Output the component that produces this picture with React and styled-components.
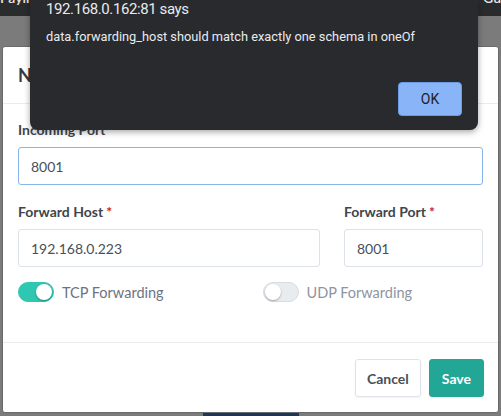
import React from "react";
import styled, { createGlobalStyle } from "styled-components";

const Global = createGlobalStyle`
  html, body { margin: 0; padding: 0; }
  body { background: #7b7b7b; overflow: hidden; font-family: Lato, "Liberation Sans", sans-serif; }
  * { box-sizing: border-box; }
`;

const Page = styled.div`
  position: relative;
  width: 501px;
  height: 416px;
  overflow: hidden;
  background: #7b7b7b;
  display: flex;
  flex-direction: column;
`;

const TopBar = styled.div`
  height: 16px;
  background: #2a2b2d;
  display: flex;
  justify-content: space-between;
  overflow: hidden;
  color: #e6e6e6;
  font: 600 14px Lato, sans-serif;
  line-height: 14px;
`;

const TopText = styled.span`
  margin-top: -9px;
`;

const ModalWrap = styled.div`
  padding: 30px 2px 0 2px;
`;

const Modal = styled.div`
  width: 497px;
  height: 367px;
  background: #fff;
  border-radius: 3px;
  border: 1px solid #6a6a6a;
  display: flex;
  flex-direction: column;
  color: #495057;
`;

const Header = styled.div`
  height: 57px;
  border-bottom: 1px solid #e9ecef;
  display: flex;
  align-items: center;
  padding: 0 15px;
`;

const Title = styled.h5`
  margin: 0;
  font: 700 18px Lato, sans-serif;
  color: #343a40;
`;

const Body = styled.div`
  padding: 16px 15px 0 15px;
  height: 239px;
  border-bottom: 1px solid #e9ecef;
`;

const Group = styled.div`
  margin-bottom: 17px;
`;

const Label = styled.label`
  display: block;
  font: 700 14px Lato, sans-serif;
  line-height: 20px;
  color: #3f454b;
  margin-bottom: 7px;
`;

const Req = styled.span`
  color: #cd201f;
  margin-left: 3px;
`;

const Input = styled.div`
  height: 38px;
  border: 1px solid ${(p) => (p.$focus ? "#86b5ea" : "#dde2e9")};
  border-radius: 3px;
  padding: 0 12px;
  display: flex;
  align-items: center;
  font: 400 14px Lato, sans-serif;
  color: #495057;
  background: #fff;
`;

const Row = styled.div`
  display: grid;
  grid-template-columns: ${(p) => p.$cols};
  column-gap: 24px;
  margin-top: ${(p) => p.$mt || "0"};
`;

const Toggle = styled.div`
  display: flex;
  align-items: center;
  gap: 8px;
  font: 400 14.5px Lato, sans-serif;
  color: ${(p) => (p.$on ? "#6b7383" : "#8d94a2")};
`;

const Track = styled.span`
  position: relative;
  width: 36px;
  height: 20px;
  border-radius: 10px;
  background: ${(p) => (p.$on ? "#2fc6b2" : "#e9ecef")};
  border: 1px solid ${(p) => (p.$on ? "#2fc6b2" : "#d8dde3")};
  flex-shrink: 0;
`;

const Knob = styled.span`
  position: absolute;
  top: 1px;
  left: ${(p) => (p.$on ? "17px" : "1px")};
  width: 16px;
  height: 16px;
  border-radius: 50%;
  background: #fff;
  box-shadow: 0 1px 2px rgba(0, 0, 0, 0.3);
`;

const Footer = styled.div`
  flex: 1;
  display: flex;
  justify-content: flex-end;
  align-items: flex-start;
  gap: 8px;
  padding: 16px 14px 0 0;
`;

const Button = styled.button`
  height: 38px;
  padding: 0 ${(p) => (p.$primary ? "12px" : "11px")};
  border-radius: 3px;
  font: 700 14px Lato, sans-serif;
  border: 1px solid ${(p) => (p.$primary ? "#22a797" : "#dfe3e8")};
  background: ${(p) => (p.$primary ? "#22a797" : "#fff")};
  color: ${(p) => (p.$primary ? "#fff" : "#495057")};
  box-shadow: 0 1px 2px rgba(0, 0, 0, 0.05);
`;

const BottomBar = styled.div`
  height: 3px;
  padding-left: 203px;
`;

const BlueBlock = styled.div`
  width: 96px;
  height: 3px;
  background: #1e355a;
`;

const Alert = styled.div`
  position: absolute;
  left: 30px;
  top: 0;
  width: 448px;
  height: 130px;
  background: #292a2d;
  border-radius: 0 0 8px 8px;
  box-shadow: 0 2px 6px rgba(0, 0, 0, 0.35);
  padding: 0 16px;
  display: flex;
  flex-direction: column;
  font-family: Roboto, "Noto Sans", sans-serif;
  color: #e8eaed;
`;

const AlertTitle = styled.div`
  font-size: 15px;
  letter-spacing: -0.4px;
  line-height: 18px;
`;

const AlertMsg = styled.div`
  font-size: 12.8px;
  line-height: 18px;
  margin-top: 10px;
`;

const AlertActions = styled.div`
  display: flex;
  justify-content: flex-end;
  margin-top: 36px;
`;

const OkButton = styled.button`
  width: 64px;
  height: 34px;
  background: #8ab4f8;
  border: 1px solid #6d9be6;
  border-radius: 4px;
  color: #202124;
  font: 400 14px Roboto, sans-serif;
`;

export default function App() {
  return (
    <>
      <Global />
      <Page>
        <TopBar>
          <TopText>Paying</TopText>
          <TopText>Gu</TopText>
        </TopBar>
        <ModalWrap>
          <Modal>
            <Header>
              <Title>New Stream</Title>
            </Header>
            <Body>
              <Group>
                <Label>Incoming Port</Label>
                <Input $focus>8001</Input>
              </Group>
              <Row $cols="calc((100% + 24px) * 2 / 3 - 24px) 1fr">
                <Group>
                  <Label>
                    Forward Host<Req>*</Req>
                  </Label>
                  <Input>192.168.0.223</Input>
                </Group>
                <Group>
                  <Label>
                    Forward Port<Req>*</Req>
                  </Label>
                  <Input>8001</Input>
                </Group>
              </Row>
              <Row $cols="1fr 1fr" $mt="-2px">
                <Toggle $on>
                  <Track $on>
                    <Knob $on />
                  </Track>
                  TCP Forwarding
                </Toggle>
                <Toggle>
                  <Track>
                    <Knob />
                  </Track>
                  UDP Forwarding
                </Toggle>
              </Row>
            </Body>
            <Footer>
              <Button>Cancel</Button>
              <Button $primary>Save</Button>
            </Footer>
          </Modal>
        </ModalWrap>
        <BottomBar>
          <BlueBlock />
        </BottomBar>
        <Alert>
          <AlertTitle>192.168.0.162:81 says</AlertTitle>
          <AlertMsg>data.forwarding_host should match exactly one schema in oneOf</AlertMsg>
          <AlertActions>
            <OkButton>OK</OkButton>
          </AlertActions>
        </Alert>
      </Page>
    </>
  );
}
